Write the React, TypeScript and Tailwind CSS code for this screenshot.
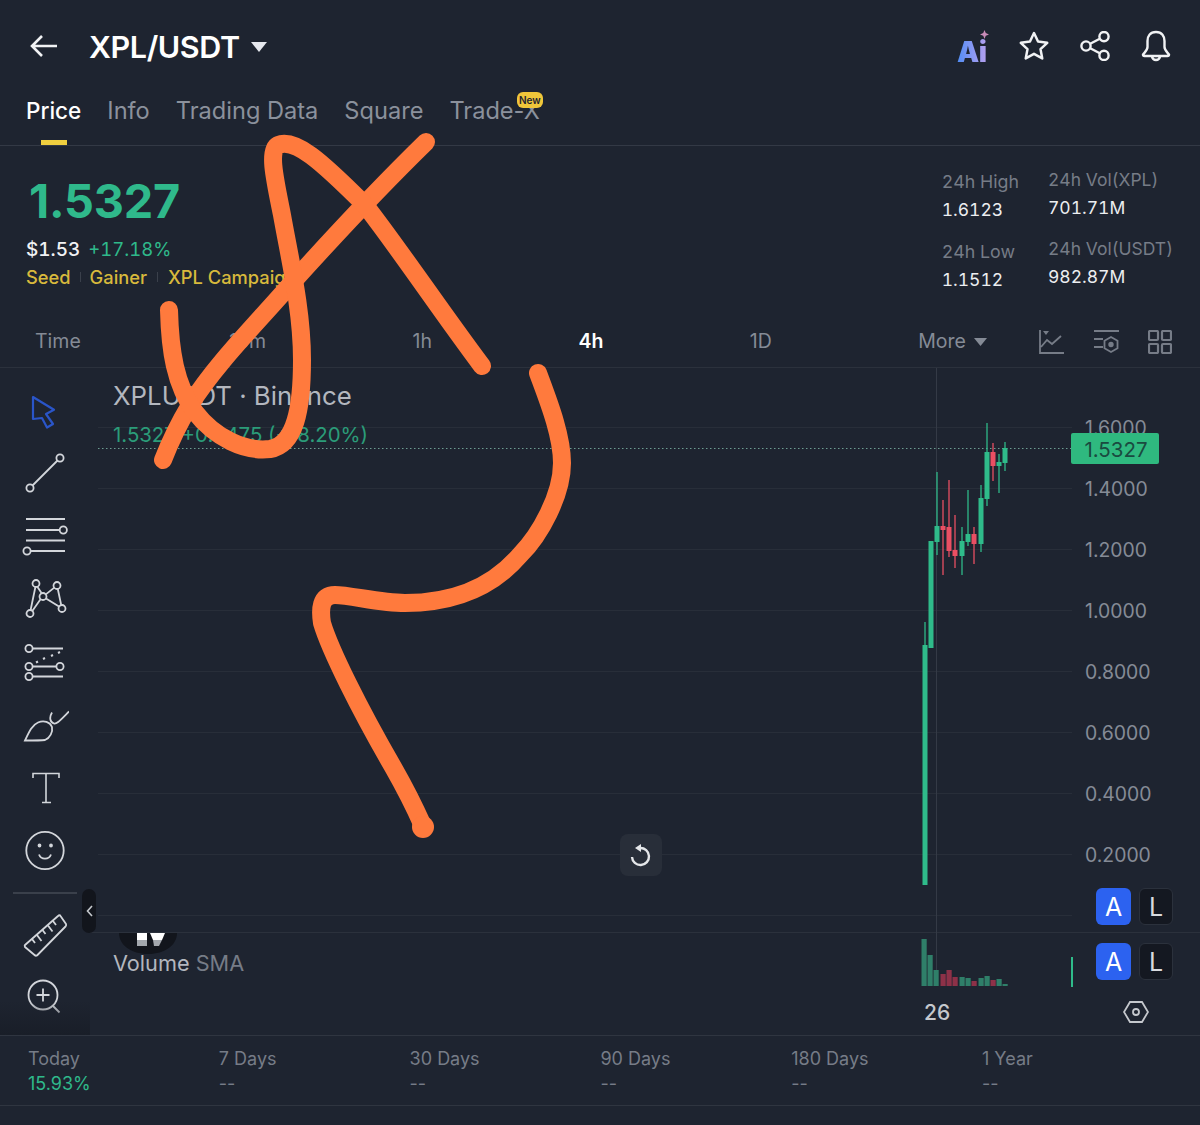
const tabs = ["Price", "Info", "Trading Data", "Square", "Trade-X"];
const prices = ["1.6000", "1.4000", "1.2000", "1.0000", "0.8000", "0.6000", "0.4000", "0.2000", ""];
const periods = [
  { label: "Today", value: "15.93%" },
  { label: "7 Days", value: "--" },
  { label: "30 Days", value: "--" },
  { label: "90 Days", value: "--" },
  { label: "180 Days", value: "--" },
  { label: "1 Year", value: "--" },
];

// x, body top, body bottom, wick top, wick bottom, up
const candles: [number, number, number, number, number, boolean][] = [
  [925, 645, 885, 622, 885, true],
  [931, 541, 648, 541, 648, true],
  [937, 526, 542, 472, 555, true],
  [943, 526, 530, 500, 575, false],
  [949, 527, 551, 480, 557, false],
  [955, 550, 556, 515, 568, false],
  [962, 541, 556, 527, 575, true],
  [968, 534, 542, 490, 546, true],
  [974, 534, 544, 527, 564, false],
  [981, 498, 544, 485, 552, true],
  [987, 452, 499, 423, 506, true],
  [993, 452, 466, 443, 481, false],
  [999, 462, 466, 454, 493, true],
  [1005, 448, 463, 442, 471, true],
];

const volumes: [number, number, boolean][] = [
  [924, 939, true],
  [930, 955, true],
  [936, 970, true],
  [943, 974, false],
  [949, 970, false],
  [955, 977, false],
  [962, 977, true],
  [968, 978, true],
  [974, 981, false],
  [981, 978, true],
  [987, 976, true],
  [993, 980, false],
  [999, 979, true],
  [1005, 984, true],
];

function ToolIcon({ children, className = "text-[#d3d6db]" }: { children: React.ReactNode; className?: string }) {
  return (
    <svg width="48" height="48" viewBox="0 0 48 48" fill="none" stroke="currentColor" strokeWidth="1.8" className={className}>
      {children}
    </svg>
  );
}

function Chart() {
  return (
    <svg className="absolute inset-0 w-[1200px] h-[667px]" viewBox="0 368 1200 667" fill="none">
      <line x1="936.5" y1="368" x2="936.5" y2="986" stroke="#343a46" />
      <line x1="98" y1="448.500" x2="1072" y2="448.500" stroke="#8fd0bb" strokeWidth="1" strokeDasharray="1.500 2.500" opacity="0.7" />
      {candles.map(([x, top, bottom, wickTop, wickBottom, up]) => (
        <g key={x} fill={up ? "#2fbb8a" : "#ea4f63"}>
          <rect x={x - 0.75} y={wickTop} width="1.5" height={wickBottom - wickTop} opacity="0.85" />
          <rect x={x - 2.5} y={top} width="5" height={bottom - top} />
        </g>
      ))}
      {volumes.map(([x, top, up]) => (
        <rect key={x} x={x - 2.5} y={top} width="5.2" height={986 - top} fill={up ? "#2f7f69" : "#8d3148"} />
      ))}
      <rect x="1071" y="957" width="2" height="30" fill="#2fbb8a" />
    </svg>
  );
}

function AL({ className }: { className: string }) {
  return (
    <div className={`absolute right-[27px] flex gap-[8px] ${className}`}>
      <div className="w-[35px] h-[37px] rounded-[6px] bg-[#2c62f0] text-white text-[25px] leading-[38px] text-center">A</div>
      <div className="w-[34px] h-[37px] rounded-[6px] bg-[#141821] border border-[#2b313c] text-[#d9dbdf] text-[25px] leading-[36px] text-center">L</div>
    </div>
  );
}

export default function App() {
  return (
    <div className="relative w-[1200px] h-[1125px] overflow-hidden bg-[#1e2430] font-[Inter,sans-serif]">
      {/* header */}
      <div className="h-[92px] flex items-center pl-[30px] pr-[29px]">
        <svg width="28" height="24" viewBox="0 0 28 24" fill="none" stroke="#f1f2f4" strokeWidth="2.6">
          <path d="M27 12H2M12 2 2 12l10 10" />
        </svg>
        <span className="ml-[31px] mt-[2px] text-[30.500px] font-semibold text-white tracking-[-0.4px]">XPL/USDT</span>
        <svg className="ml-[11px] mt-[2px]" width="16" height="11" viewBox="0 0 16 11" fill="#e6e8ee">
          <path d="M0 0h16L8 10z" />
        </svg>
        <div className="ml-auto flex items-center gap-[31px]">
          <div className="relative w-[32px] h-[30px]">
            <span className="block text-[28px] leading-[30px] mt-[6px] ml-[1px] font-black tracking-[-0.5px] bg-gradient-to-r from-[#4d8cf5] to-[#b8a0ee] bg-clip-text text-transparent">Ai</span>
            <svg className="absolute right-[-1px] top-[-1px]" width="9" height="9" viewBox="0 0 10 10" fill="#c98bb8">
              <path d="m5 0 1.400 3.400L10 5 6.400 6.400 5 10 3.600 6.400 0 5l3.600-1.600z" />
            </svg>
          </div>
          <svg width="30" height="30" viewBox="0.500 0.500 29 29" fill="none" stroke="#f1f2f4" strokeWidth="2.400" strokeLinejoin="round">
            <path d="m15 2.500 3.900 8.200 8.900 1.200-6.500 6.200 1.700 8.900-8-4.400-8 4.400 1.700-8.900-6.500-6.200 8.900-1.200z" />
          </svg>
          <svg width="30" height="30" viewBox="0 0 30 30" fill="none" stroke="#f1f2f4" strokeWidth="2.400">
            <circle cx="6" cy="15" r="4.600" />
            <circle cx="24" cy="5.600" r="4.600" />
            <circle cx="24" cy="24.400" r="4.600" />
            <path d="m10.200 12.800 9.600-5M10.200 17.200l9.600 5" />
          </svg>
          <svg width="30" height="32" viewBox="0 0 30 32" fill="none" stroke="#f1f2f4" strokeWidth="2.400" strokeLinejoin="round">
            <path d="M15 2C9 2 6.500 6.500 6.500 11v6c0 3-2 4.500-4.500 7.500 0 1 .5 1.500 1.500 1.500h23c1 0 1.500-.5 1.500-1.500-2.500-3-4.500-4.500-4.500-7.500v-6c0-4.500-2.500-9-8.500-9z" />
            <path d="M11 26.500c.5 2.500 2 3.500 4 3.500s3.500-1 4-3.500" />
          </svg>
        </div>
      </div>

      {/* tabs */}
      <div className="h-[54px] flex gap-[26px] pl-[26px] border-b border-[#333945]">
        {tabs.map((tab, i) => (
          <div key={tab} className="relative h-full">
            <span className={`block leading-[38px] ${i === 0 ? "text-[22.500px] text-white font-medium" : "text-[23.600px] text-[#8b919c]"}`}>{tab}</span>
            {i === 0 && <div className="absolute bottom-0 left-[15px] w-[26px] h-[5px] bg-[#f0cf3f]" />}
            {tab === "Trade-X" && (
              <span className="absolute right-[-3px] top-0 w-[26px] h-[16px] rounded-[6px] bg-[#f0c63a] text-[#1e2430] text-[10px] font-semibold leading-[16px] text-center">New</span>
            )}
          </div>
        ))}
      </div>

      {/* stats */}
      <div className="h-[175px] flex pl-[26px] pr-[27px]">
        <div className="pt-[26px]">
          <div className="ml-[3px] mt-[1px] text-[46.800px] leading-[57px] font-bold text-[#2fb98b] tracking-[-0.2px]">1.5327</div>
          <div className="mt-[6px] flex items-baseline gap-[8px] leading-[26px] tabular-nums">
            <span className="text-[19px] text-[#f1f2f4] font-medium">$1.53</span>
            <span className="text-[#2fb98b] text-[18.500px]">+17.18%</span>
          </div>
          <div className="mt-[2px] flex items-center text-[18.300px] leading-[24px] text-[#d8b93c] font-medium">
            <span>Seed</span>
            <span className="mx-[9px] h-[10px] w-px bg-[#3a404b]" />
            <span>Gainer</span>
            <span className="mx-[10px] h-[10px] w-px bg-[#3a404b]" />
            <span>XPL Campaign</span>
          </div>
        </div>
        <div className="ml-auto flex gap-[29px] tabular-nums">
          <div className="pt-[23px]">
            <div className="text-[17.800px] leading-[26px] text-[#767c87]">24h High</div>
            <div className="mt-[2px] text-[17.500px] leading-[26px] text-[#eceef0]">1.6123</div>
            <div className="mt-[16px] text-[17.800px] leading-[26px] text-[#767c87]">24h Low</div>
            <div className="mt-[2px] text-[17.500px] leading-[26px] text-[#eceef0]">1.1512</div>
          </div>
          <div className="pt-[21px]">
            <div className="text-[17.500px] leading-[26px] text-[#767c87]">24h Vol(XPL)</div>
            <div className="mt-[2px] text-[17.500px] leading-[26px] text-[#eceef0]">701.71M</div>
            <div className="mt-[15px] text-[17.500px] leading-[26px] text-[#767c87]">24h Vol(USDT)</div>
            <div className="mt-[2px] text-[17.500px] leading-[26px] text-[#eceef0]">982.87M</div>
          </div>
        </div>
      </div>

      {/* timeframes */}
      <div className="h-[47px] flex items-center pl-[35px] pr-[28px] pb-[5px] border-b border-[#2b313c] text-[19.500px] text-[#858b96]">
        <div className="w-[952px] flex justify-between items-center">
          <span>Time</span>
          <span className="ml-[2px]">15m</span>
          <span>1h</span>
          <span className="text-white font-semibold">4h</span>
          <span>1D</span>
          <span className="flex items-center gap-[8px]">
            More
            <svg width="13" height="8" viewBox="0 0 13 8" fill="#858b96">
              <path d="M0 0h13L6.500 8z" />
            </svg>
          </span>
        </div>
        <div className="ml-auto flex items-center gap-[29px] text-[#767c87]">
          <svg width="26" height="26" viewBox="0 0 26 26" fill="none" stroke="currentColor" strokeWidth="1.800">
            <path d="M2 1v23h24M3 18l6-7 5 4 9-8" />
            <path d="M5 2h6L8 6z" fill="currentColor" stroke="none" />
          </svg>
          <svg width="26" height="26" viewBox="0 0 26 26" fill="none" stroke="currentColor" strokeWidth="1.800">
            <path d="M1 2h25M1 10h9M1 18h9" />
            <path d="m18 8 6.500 3.700v7.600L18 23l-6.500-3.700v-7.600z" />
            <circle cx="18" cy="15.500" r="1.800" fill="currentColor" />
          </svg>
          <svg width="24" height="24" viewBox="0 0 24 24" fill="none" stroke="currentColor" strokeWidth="2.200">
            <rect x="1" y="1" width="9" height="9" rx="1" />
            <rect x="14" y="1" width="9" height="9" rx="1" />
            <rect x="1" y="14" width="9" height="9" rx="1" />
            <rect x="14" y="14" width="9" height="9" rx="1" />
          </svg>
        </div>
      </div>

      {/* chart */}
      <div className="relative h-[667px] flex">
        {/* drawing tools */}
        <div className="w-[90px] pt-[10px] flex flex-col items-center">
          <div className="h-[63px] flex items-center justify-center">
            <ToolIcon className="text-[#2a55c8]">
              <path d="M12 11 33 23.800 25 28 32 38 26 41.500 21 32 12 33z" strokeWidth="2.200" strokeLinejoin="round" />
            </ToolIcon>
          </div>
          <div className="h-[63px] flex items-center justify-center">
            <ToolIcon>
              <circle cx="39" cy="9" r="3.600" />
              <circle cx="9" cy="39" r="3.600" />
              <path d="M36.500 11.500 11.500 36.500" />
            </ToolIcon>
          </div>
          <div className="h-[63px] flex items-center justify-center">
            <ToolIcon>
              <path d="M5 7h39M5 18h33.500M5 28.500h39M10 39h34" />
              <circle cx="42.300" cy="18" r="3.600" />
              <circle cx="6" cy="39" r="3.600" />
            </ToolIcon>
          </div>
          <div className="h-[63px] flex items-center justify-center">
            <ToolIcon>
              <circle cx="15" cy="8.500" r="3.500" />
              <circle cx="36" cy="10.500" r="3.500" />
              <circle cx="22" cy="21.500" r="3.500" />
              <circle cx="41" cy="33.500" r="3.500" />
              <circle cx="9" cy="38.500" r="3.500" />
              <path d="m16.500 12 4 6M14.400 12 9.600 35M33.300 12.600l-8.500 6.800M36.800 14l3.400 16M25 23.400l13 8.200M19.700 24l-8.400 12" />
            </ToolIcon>
          </div>
          <div className="h-[63px] flex items-center justify-center">
            <ToolIcon>
              <circle cx="8" cy="10.500" r="3.600" />
              <circle cx="8" cy="28.500" r="3.600" />
              <circle cx="39" cy="28.500" r="3.600" />
              <circle cx="8" cy="38.500" r="3.600" />
              <path d="M11.600 10.500H42M11.600 28.500h23.800M11.600 38.500H42" />
              <path d="m15 24.500 2-1M22 21l2-1M30 18l2-1M37 15l2-1" strokeWidth="2" />
            </ToolIcon>
          </div>
          <div className="h-[63px] flex items-center justify-center">
            <ToolIcon>
              <path d="M4 39.500C8 31 11 24 17 21.500 23 19 29 21 31 26 32 31 29 37 24 39 20 39.500 10 39.500 4 39.500z" />
              <path d="M31 11.500c-3 5-2 10 2 11 3 .5 5-2 15-12" />
            </ToolIcon>
          </div>
          <div className="h-[63px] flex items-center justify-center">
            <ToolIcon>
              <path d="M12 14V9.500h26V14M25 9.500v29M21 38.500h9" strokeWidth="1.600" />
            </ToolIcon>
          </div>
          <div className="h-[63px] flex items-center justify-center">
            <ToolIcon>
              <circle cx="24" cy="23.500" r="18.700" />
              <circle cx="18.500" cy="18.500" r="1" />
              <circle cx="30" cy="18.500" r="1" />
              <path d="M18 27.500c2 5.500 10 5.500 12 0" />
            </ToolIcon>
          </div>
          <div className="mt-[10px] w-[64px] h-[2px] bg-[#3a404b]" />
          <div className="mt-[9px] h-[63px] flex items-center justify-center">
            <ToolIcon>
              <path d="m4 34 33-29c1-1 2-1 2.500 0l5.500 8c.5 1 .5 1.500-.5 2.500L16 44.500c-1 .5-1.500.5-2.500-.5L4 36c-.5-1-.5-1.500 0-2z" strokeLinejoin="round" />
              <path d="m11 28 3 4M16 24l4.500 6M21.500 19l3 4M27 14.500l4.500 6M32 10l3 4" />
            </ToolIcon>
          </div>
          <div className="h-[62px] flex items-center justify-center">
            <ToolIcon>
              <circle cx="22" cy="22" r="14.500" />
              <path d="M22 15.500v13M15.500 22h13M32 33l6.500 6.500" />
            </ToolIcon>
          </div>
        </div>

        {/* price pane and volume pane */}
        <div className="w-[1110px]">
          <div className="relative h-[565px] overflow-hidden border-b border-[#2b313c]">
            <div className="pt-[29px]">
              {prices.map((price, i) => (
                <div key={i} className="h-[61px] flex items-center">
                  <div className="ml-[8px] w-[974px] h-px bg-[#282e39]" />
                  {price && <span className="ml-[13px] mt-[2px] text-[19.400px] text-[#858b96]">{price}</span>}
                </div>
              ))}
            </div>
            <div className="absolute left-[23px] top-[11px]">
              <div className="text-[25.800px] leading-[34px] text-[#b3b7bf]">XPLUSDT · Binance</div>
              <div className="mt-[8px] text-[20.400px] leading-[28px] text-[#2b9c79]">1.5327 +0.2475 (+18.20%)</div>
            </div>
          </div>
          <div className="relative h-[101px]">
            <svg className="absolute left-[29px] top-0" width="60" height="22" viewBox="0 0 60 22">
              <path d="M0 0h58c0 12-12 21-29 21S0 12 0 0z" fill="#12151c" />
              <rect x="18" y="0" width="10" height="7" fill="#ffffff" />
              <rect x="18" y="7" width="10" height="6" fill="#a3a7ad" />
              <path d="M31 0h15l-3 7h-9z" fill="#ffffff" />
              <path d="M34 7h9l-3 6h-5z" fill="#a3a7ad" />
            </svg>
            <div className="absolute left-[23px] top-[15px] text-[21.700px] leading-[30px] text-[#b3b7bf]">
              Volume <span className="text-[#767c87]">SMA</span>
            </div>
            <span className="absolute left-[834px] top-[65px] text-[21px] leading-[30px] font-medium text-[#c5c8cd]">26</span>
            <svg className="absolute left-[1033px] top-[67px]" width="26" height="24" viewBox="0 0 26 24" fill="none" stroke="#c5c8cd" strokeWidth="1.800">
              <path d="M7 2h12l6 10-6 10H7L1 12z" />
              <circle cx="13" cy="12" r="3" />
            </svg>
          </div>
        </div>

        <Chart />

        {/* overlays on the chart */}
        <div className="absolute left-[1071px] top-[65px] w-[88px] h-[31px] rounded-[2px] bg-[#2fb97f] text-[20.500px] leading-[33px] text-center text-[#1a4a40] pl-[2px]">1.5327</div>
        <div className="absolute left-[620px] top-[466px] w-[42px] h-[42px] rounded-[8px] bg-[#282e39] flex items-center justify-center">
          <svg width="24" height="24" viewBox="0 0 24 24" fill="none" stroke="#e4e6e9" strokeWidth="2.400">
            <path d="M11 5a8.500 8.500 0 1 1-8 9" />
            <path d="M6 5l6-4v8z" fill="#e4e6e9" stroke="none" />
          </svg>
        </div>
        <div className="absolute left-[82px] top-[521px] w-[14px] h-[44px] rounded-[7px] bg-[#12151c] flex items-center justify-center">
          <svg width="7" height="12" viewBox="0 0 7 12" fill="none" stroke="#c5c8cd" strokeWidth="1.600">
            <path d="M6 1 1.500 6 6 11" />
          </svg>
        </div>
        <AL className="top-[520px]" />
        <AL className="top-[575px]" />
        <div className="absolute left-0 bottom-0 w-[90px] h-[34px] bg-gradient-to-b from-transparent to-[#191e28]" />
      </div>

      {/* period returns */}
      <div className="h-[71px] flex pl-[28px] pt-[10px] border-y border-[#2f3540] text-[18px]">
        {periods.map((p) => (
          <div key={p.label} className="w-[190.800px]">
            <div className="leading-[25px] text-[#767c87]">{p.label}</div>
            <div className={`leading-[25px] ${p.value === "--" ? "text-[#767c87]" : "text-[#2fb98b]"}`}>{p.value}</div>
          </div>
        ))}
      </div>

      {/* pen scribble on top of the screenshot */}
      <svg className="absolute inset-0 pointer-events-none" width="1200" height="1125" viewBox="0 0 1200 1125" fill="none" stroke="#ff7a3d" strokeWidth="18" strokeLinecap="round" strokeLinejoin="round">
        <path d="M426 142C385 182 335 235 290 285 255 325 215 365 190 405 178 425 170 442 163 460" />
        <path d="M169 310C170 350 175 385 195 412 215 438 245 452 270 449 295 445 302 410 302 360 302 310 290 260 282 215 275 180 268 150 278 145 295 138 320 160 365 205 400 250 440 310 482 366" />
        <path d="M538 373C548 400 562 435 562 463 562 495 540 535 520 555 490 590 450 603 405 603 380 603 350 595 335 595 320 595 320 610 322 623 330 650 360 710 393 767 405 788 415 808 423 826" />
        <circle cx="423" cy="827" r="11" fill="#ff7a3d" stroke="none" />
      </svg>
    </div>
  );
}
